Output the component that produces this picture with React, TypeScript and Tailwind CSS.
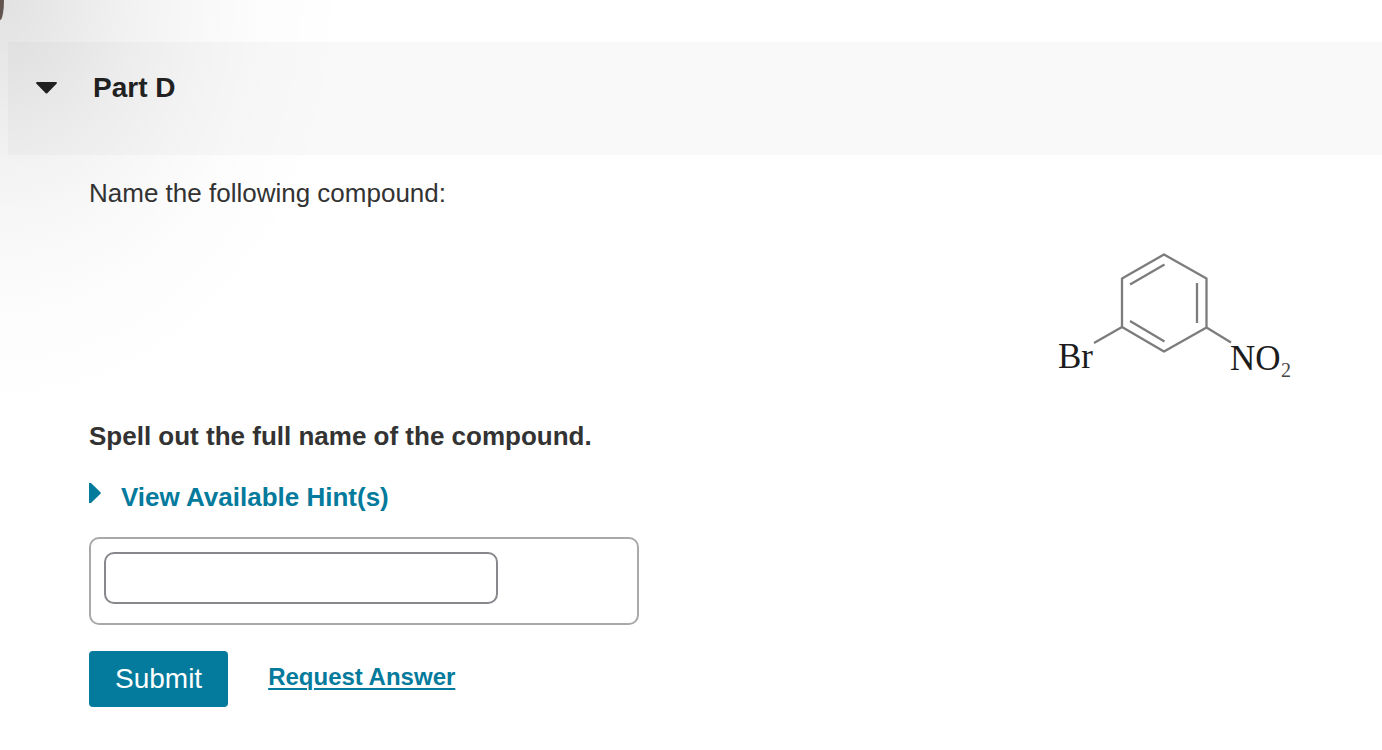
import { useState, FormEvent } from "react";

/**
 * Skeletal formula: benzene ring with Br and NO2 substituents
 */
const CompoundFigure = () => (
  <svg
    width="250"
    height="140"
    viewBox="0 0 250 140"
    role="img"
    aria-label="Benzene ring with Br and NO2 groups"
  >
    <g fill="none" stroke="#7c7c7c" strokeWidth="2.3" strokeLinejoin="round">
      {/* Ring */}
      <path d="M114 9.5 L72 33.5 V82 L114 106.5 L156.5 82.5 V33.5 Z" />
      {/* Double bonds */}
      <path d="M80 39.5 L114.5 19.5 M80 76 L114.5 96.5 M147 38 V78" />
      {/* Substituent bonds */}
      <path d="M72 82 L44 98 M156.5 82.5 L181 97.5" />
    </g>
    <g fill="#1c1c1c" fontFamily="'Liberation Serif', serif" fontSize="35">
      <text x="8" y="123">Br</text>
      <text x="180" y="125">NO</text>
      <text x="231" y="132" fontSize="20" fill="#444">2</text>
    </g>
  </svg>
);

interface PartHeaderProps {
  title: string;
  open: boolean;
  onToggle: () => void;
}

const PartHeader = ({ title, open, onToggle }: PartHeaderProps) => (
  <header className="ml-2 bg-[#f9f9f9] pt-[26px] pb-[47px] pl-7">
    <button
      type="button"
      aria-expanded={open}
      onClick={onToggle}
      className="flex items-center gap-9 text-[28px] leading-10 font-bold text-[#222]"
    >
      <svg width="21" height="12" viewBox="0 0 21 12" aria-hidden="true">
        <path d="M1 0 H20 Q21.5 0.5 20.5 1.8 L11.5 11 Q10.5 12 9.5 11 L0.5 1.8 Q-0.5 0.5 1 0 Z" fill="#222" />
      </svg>
      <span>{title}</span>
    </button>
  </header>
);

export default function App() {
  const [open, setOpen] = useState(true);
  const [answer, setAnswer] = useState("");

  const handleSubmit = (e: FormEvent) => {
    e.preventDefault();
  };

  return (
    <main className="relative min-h-screen overflow-hidden bg-white pt-[42px] font-['Liberation_Sans',Arial,sans-serif] text-[#333]">
      <PartHeader title="Part D" open={open} onToggle={() => setOpen(!open)} />

      {open && (
        <form onSubmit={handleSubmit} className="pt-5 pr-[82px] pl-[89px] text-[26px] leading-9">
          <p>Name the following compound:</p>

          <div className="mt-[34px] flex justify-end">
            <CompoundFigure />
          </div>

          <label htmlFor="compound-name" className="mt-[33px] block font-bold">
            Spell out the full name of the compound.
          </label>

          <button type="button" className="mt-[25px] flex items-center gap-5 font-bold text-[#047a9c]">
            <svg width="12" height="20" viewBox="0 0 12 20" className="mb-2" aria-hidden="true">
              <path d="M0 0 H2 L11.5 9.2 Q12 10 11.5 10.8 L2 20 H0 Z" fill="currentColor" />
            </svg>
            View Available Hint(s)
          </button>

          <div className="mt-[22px] max-w-[550px] rounded-[10px] border-2 border-[#a9a9a9] px-[13px] pt-[13px] pb-[19px]">
            <input
              id="compound-name"
              type="text"
              value={answer}
              onChange={(e) => setAnswer(e.target.value)}
              className="block h-[52px] w-full max-w-[394px] rounded-[10px] border-2 border-[#87878c] bg-white px-3 outline-none"
            />
          </div>

          <div className="mt-[26px] flex items-center gap-10">
            <button type="submit" className="h-14 rounded bg-[#047a9c] px-[26px] text-[28px] text-white">
              Submit
            </button>
            <a
              href="#answer"
              className="mb-1 text-2xl font-bold text-[#047a9c] underline decoration-2 underline-offset-3"
            >
              Request Answer
            </a>
          </div>
        </form>
      )}

      {/* Soft shade in the top left corner */}
      <div className="pointer-events-none absolute top-0 left-0 h-[420px] w-[350px] bg-[radial-gradient(ellipse_at_top_left,rgba(0,0,0,0.118)_0%,rgba(0,0,0,0.088)_13%,rgba(0,0,0,0.052)_27%,rgba(0,0,0,0.026)_40%,rgba(0,0,0,0.01)_52%,rgba(0,0,0,0.003)_64%,transparent_70%)]" />
      <div className="pointer-events-none absolute top-0 left-0 h-5 w-1 rounded-br-[100%] bg-[#62554f]" />
    </main>
  );
}
